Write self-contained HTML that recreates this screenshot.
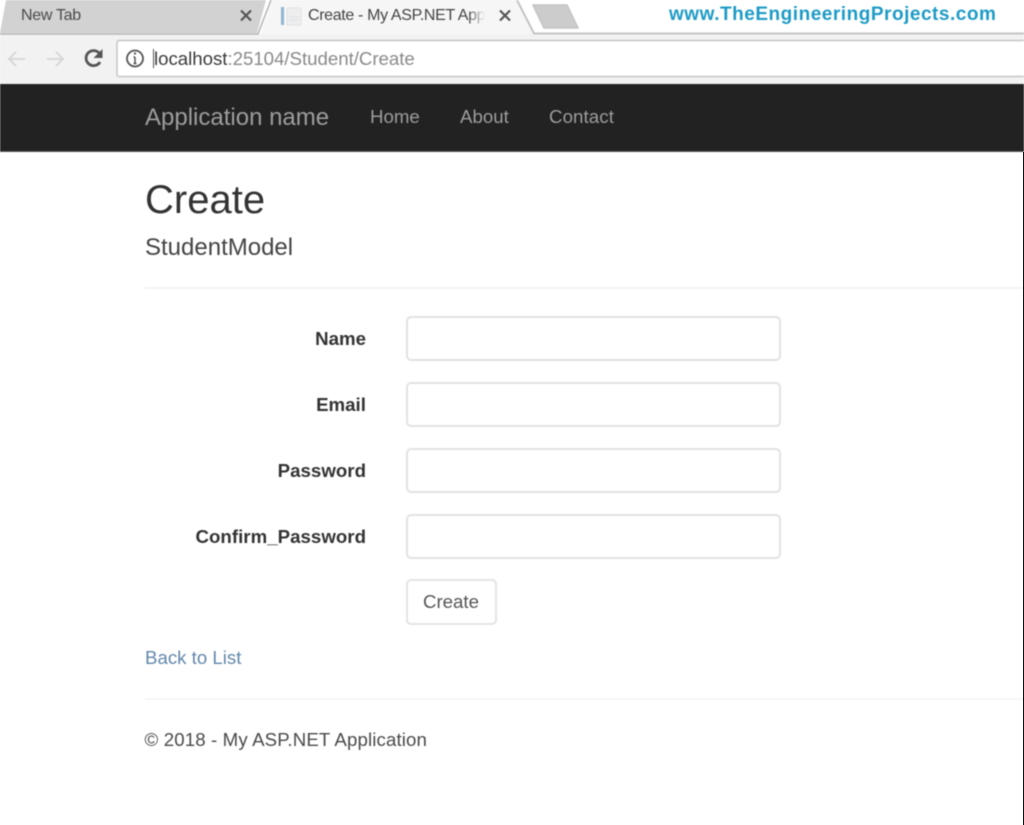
<!DOCTYPE html>
<html lang="en">
<head>
<meta charset="utf-8">
<title>Create - My ASP.NET Application</title>
<style>
html,body{margin:0;padding:0;background:#fff}
body{width:1024px;height:825px;position:relative;overflow:hidden;font-family:"Liberation Sans",Arial,sans-serif;color:#333}
#page{position:absolute;left:0;top:0;width:1024px;height:825px;filter:blur(.5px)}
.t{position:absolute;white-space:nowrap;line-height:1}
.r{position:absolute;box-sizing:border-box}
.lb{position:absolute;right:658px;font-weight:bold;font-size:18.67px;line-height:24px;color:#333;white-space:nowrap;letter-spacing:.03px}
.in{position:absolute;left:406px;width:375px;height:45px;box-sizing:border-box;border:2px solid #e2e2e2;border-radius:5px;background:#fff}
svg{position:absolute;left:0;top:0}
</style>
</head>
<body>
<div id="page">
<svg width="1024" height="84" viewBox="0 0 1024 84">
  <rect x="0" y="0" width="1024" height="84" fill="#fff"/>
  <rect x="0" y="34" width="1024" height="50" fill="#f2f2f2"/>
  <path d="M6 0H266L257 33H0Z" fill="#d2d2d2"/>
  <path d="M272 0H517L534 34H261Z" fill="#f6f6f6"/>
  <path d="M1024 33.500H534L517 0" fill="none" stroke="#c4c4c4" stroke-width="2"/>
  <path d="M0 34H258L271 0" fill="none" stroke="#b4b4b4" stroke-width="1.500"/>
  <path d="M533 5H567L578 28H544Z" fill="#cccccc" stroke="#c4c4c4" stroke-linejoin="round" stroke-width="1.500"/>
  <!-- tab close icons -->
  <path d="M241 10.500L251 20.500M251 10.500L241 20.500" stroke="#555" stroke-width="2.200" fill="none"/>
  <path d="M500 10.500L510 20.500M510 10.500L500 20.500" stroke="#555" stroke-width="2.200" fill="none"/>
  <!-- favicon -->
  <rect x="281" y="7" width="3" height="18" fill="#8fb6d2"/>
  <rect x="287" y="8" width="14" height="17" fill="#eeeeee" stroke="#e2e2e2"/>
  <path d="M289 17H299M289 20H299" stroke="#dbe2e7" stroke-width="1"/>
  <!-- toolbar icons -->
  <path d="M25 59H9M16 52L9 59L16 66" fill="none" stroke="#d8d8d8" stroke-width="2"/>
  <path d="M47 59H63M56 52L63 59L56 66" fill="none" stroke="#d8d8d8" stroke-width="2"/>
  <path d="M100 62A7.500 7.500 0 1 1 99.500 53.500" fill="none" stroke="#555" stroke-width="2.800"/>
  <path d="M102.500 49V58H93.500Z" fill="#555"/>
  <!-- omnibox -->
  <rect x="117" y="40.500" width="910" height="36" rx="2" fill="#fff" stroke="#c6c6c6" stroke-width="1.500"/>
  <circle cx="135" cy="58.500" r="8" fill="none" stroke="#555" stroke-width="1.800"/>
  <path d="M135 57V63.500M133.500 57H135M133.500 63.500H136.500" stroke="#555" stroke-width="1.500" fill="none"/>
  <rect x="134" y="52.500" width="2" height="2" fill="#555"/>
  <rect x="153" y="49" width="1" height="19" fill="#555"/>
</svg>

<div class="t" style="left:21px;top:8px;font-size:16px;color:#4a4a4a;letter-spacing:-.3px">New Tab</div>
<div class="r" style="left:308px;top:0;width:178px;height:32px;overflow:hidden"><div class="t" style="left:0;top:8px;font-size:16px;color:#444;letter-spacing:-.35px">Create - My ASP.NET Application</div></div>
<div class="r" style="left:468px;top:0;width:19px;height:32px;background:linear-gradient(90deg,rgba(246,246,246,0),#f6f6f6 90%)"></div>
<div class="t" style="left:669px;top:5px;font-size:19px;font-weight:bold;color:#1e9bc6;letter-spacing:.52px">www.TheEngineeringProjects.com</div>
<div class="t" style="left:154px;top:50px;font-size:18.67px;color:#3a3a3a;letter-spacing:-.02px">localhost<span style="color:#8a8a8a">:25104/Student/Create</span></div>

<div class="r" style="left:0;top:84px;width:1024px;height:68px;background:#222;border-bottom:1px solid #555"></div>
<div class="t" style="left:145px;top:106px;font-size:24px;color:#9d9d9d">Application name</div>
<div class="t" style="left:370px;top:108px;font-size:18.67px;color:#9d9d9d">Home</div>
<div class="t" style="left:460px;top:108px;font-size:18.67px;color:#9d9d9d">About</div>
<div class="t" style="left:549px;top:108px;font-size:18.67px;color:#9d9d9d;letter-spacing:.1px">Contact</div>

<div class="t" style="left:145px;top:180px;font-size:40px;color:#333">Create</div>
<div class="t" style="left:145px;top:236px;font-size:24px;color:#444">StudentModel</div>
<div class="r" style="left:145px;top:287px;width:879px;height:2px;background:#f4f4f4"></div>

<div class="lb" style="top:326.500px">Name</div>
<div class="in" style="top:316px"></div>
<div class="lb" style="top:392.500px">Email</div>
<div class="in" style="top:382px"></div>
<div class="lb" style="top:458.500px">Password</div>
<div class="in" style="top:448px"></div>
<div class="lb" style="top:524.500px">Confirm_Password</div>
<div class="in" style="top:514px"></div>

<div class="r" style="left:406px;top:579px;width:91px;height:46px;border:2px solid #e4e4e4;border-radius:5px;background:#fff"></div>
<div class="t" style="left:423px;top:593px;font-size:18.67px;color:#555">Create</div>

<div class="t" style="left:145px;top:649px;font-size:18.67px;color:#6288ab">Back to List</div>
<div class="r" style="left:145px;top:698px;width:879px;height:2px;background:#f5f5f5"></div>
<div class="t" style="left:144.500px;top:731px;font-size:18.67px;color:#4a4a4a;letter-spacing:.13px">© 2018 - My ASP.NET Application</div>
</div>
<div style="position:absolute;left:1023px;top:152px;width:1px;height:673px;background:#111"></div>
</body>
</html>
